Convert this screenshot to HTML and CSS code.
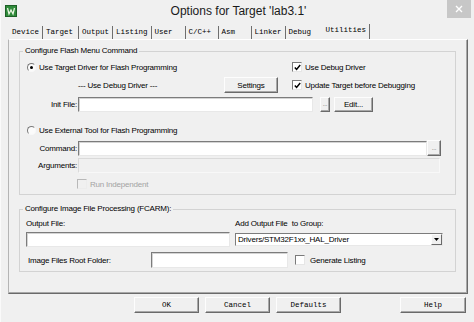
FILE: index.html
```html
<!DOCTYPE html>
<html lang="en">
<head>
    <meta charset="UTF-8">
    <meta name="viewport" content="width=device-width, initial-scale=1.0">
    <title>Options for Target 'lab3.1'</title>
    <link rel="stylesheet" href="styles.css">
</head>
<body>
<div class="window">
    <div class="titlebar">
        <div class="app-icon">
            <svg width="12" height="12" viewBox="0 0 12 12">
                <rect x="0.5" y="0.5" width="11" height="11" fill="#2f8a3a" stroke="#1d5f26"/>
                <polyline points="2.5,3 4,9 6,5 8,9 9.5,3" fill="none" stroke="#e8f5e0" stroke-width="1.3"/>
            </svg>
        </div>
        <div class="title">Options for Target 'lab3.1'</div>
        <div class="close">
            <svg width="8" height="8" viewBox="0 0 8 8">
                <path d="M1 1 L7 7 M7 1 L1 7" stroke="#fff" stroke-width="1.4"/>
            </svg>
        </div>
    </div>

    <div class="tabs">
        <span class="tab">Device</span>
        <span class="tab wide">Target</span>
        <span class="tab">Output</span>
        <span class="tab">Listing</span>
        <span class="tab mid">User</span>
        <span class="tab">C/C++</span>
        <span class="tab">Asm</span>
        <span class="tab mid">Linker</span>
        <span class="tab mid before-active">Debug</span>
        <span class="tab active">Utilities</span>
    </div>

    <div class="panel">
        <fieldset class="group flash">
            <legend>Configure Flash Menu Command</legend>

            <div class="row r1">
                <div class="left">
                    <span class="radio on"></span>
                    <span>Use Target Driver for Flash Programming</span>
                </div>
                <div class="opt">
                    <span class="check"><svg width="7" height="7" viewBox="0 0 7 7"><polyline points="0.8,3.4 2.6,5.4 6.2,1" fill="none" stroke="#000" stroke-width="1.5"/></svg></span>
                    <span>Use Debug Driver</span>
                </div>
            </div>

            <div class="row r2">
                <div class="left">
                    <span class="debug-driver">--- Use Debug Driver ---</span>
                    <span class="btn settings">Settings</span>
                </div>
                <div class="opt">
                    <span class="check"><svg width="7" height="7" viewBox="0 0 7 7"><polyline points="0.8,3.4 2.6,5.4 6.2,1" fill="none" stroke="#000" stroke-width="1.5"/></svg></span>
                    <span>Update Target before Debugging</span>
                </div>
            </div>

            <div class="row r3">
                <span class="lbl">Init File:</span>
                <span class="field init-file"></span>
                <span class="btn dots small">...</span>
                <span class="btn edit">Edit...</span>
            </div>

            <div class="row r4">
                <span class="radio"></span>
                <span>Use External Tool for Flash Programming</span>
            </div>

            <div class="row r5">
                <span class="lbl">Command:</span>
                <span class="field command"></span>
                <span class="btn cmd-dots small">...</span>
            </div>

            <div class="row r6">
                <span class="lbl">Arguments:</span>
                <span class="field disabled arguments"></span>
            </div>

            <div class="row r7">
                <span class="check disabled"></span>
                <span class="greyed">Run Independent</span>
            </div>
        </fieldset>

        <fieldset class="group fcarm">
            <legend>Configure Image File Processing (FCARM):</legend>

            <div class="row ra">
                <span class="col-left">Output File:</span>
                <span class="col-right">Add Output File &nbsp;to Group:</span>
            </div>

            <div class="row rb">
                <span class="field output-file"></span>
                <span class="select">
                    <span class="select-text">Drivers/STM32F1xx_HAL_Driver</span>
                    <span class="select-arrow"><svg width="5" height="3" viewBox="0 0 5 3"><path d="M0 0 H5 L2.5 3 Z" fill="#000"/></svg></span>
                </span>
            </div>

            <div class="row rc">
                <span class="root-label">Image Files Root Folder:</span>
                <span class="field root-folder"></span>
                <span class="check"></span>
                <span class="gen-label">Generate Listing</span>
            </div>
        </fieldset>
    </div>

    <div class="buttons">
        <span class="btn big">OK</span>
        <span class="btn big">Cancel</span>
        <span class="btn big">Defaults</span>
        <span class="btn big help">Help</span>
    </div>
</div>
</body>
</html>
```

FILE: styles.css
```css
body {
    margin: 0;
    background-color: #f0f0f0;
    font-family: "Liberation Sans", Arial, sans-serif;
    font-size: 8px;
    letter-spacing: -0.2px;
    color: #000;
}
.window {
    width: 474px;
    height: 322px;
    overflow: hidden;
    background-color: #f0f0f0;
    box-sizing: border-box;
    border-left: 1px solid #fafafa;
}

/* title bar */
.titlebar {
    height: 21px;
    display: grid;
    grid-template-columns: 1fr auto 1fr;
    align-items: center;
}
.app-icon {
    margin-left: 4px;
    height: 12px;
}
.title {
    font-size: 12px;
    letter-spacing: 0;
    color: #1a1a1a;
    padding-left: 2px;
}
.close {
    justify-self: end;
    align-self: start;
    width: 24px;
    height: 18px;
    margin-right: 3px;
    background-color: #c7c7c7;
    display: flex;
    align-items: center;
    justify-content: center;
}

/* tabs */
.tabs {
    height: 18px;
    display: flex;
    align-items: flex-end;
    padding-left: 8px;
    font-family: "Liberation Mono", "Courier New", monospace;
    font-size: 7.5px;
    letter-spacing: 0;
}
.tab {
    min-width: 26px;
    height: 13px;
    line-height: 12px;
    padding: 0 3px;
    border-right: 1px solid #6e6e6e;
    box-sizing: content-box;
}
.tab.wide {
    min-width: 29px;
}
.tab.mid {
    min-width: 27px;
}
.tab.before-active {
    border-right-color: transparent;
}
.tab.active {
    height: 15px;
    line-height: 12px;
    padding: 0 3px 0 6px;
}

/* tab page */
.panel {
    width: 460px;
    height: 255px;
    margin-left: 7px;
    box-sizing: border-box;
    border-top: 1px solid #ffffff;
    border-left: 1px solid #b4b4b4;
    border-right: 1px solid #6a6a6a;
    border-bottom: 1px solid #6a6a6a;
    box-shadow: inset -1px -1px 0 #a8a8a8;
    overflow: hidden;
}
.group {
    width: 437px;
    margin: 0 0 0 10px;
    padding: 0;
    box-sizing: border-box;
    border: 1px solid #d3d3d3;
}
.group legend {
    margin-left: 3px;
    padding: 0 2px;
    line-height: 12px;
}
.flash {
    margin-top: 5px;
    padding-bottom: 1px;
}
.fcarm {
    margin-top: 8px;
    padding-bottom: 3px;
}

.row {
    display: flex;
    align-items: center;
}
.r1 { height: 20px; }
.r2 { height: 16px; }
.r3 { height: 16px; margin-top: 3px; }
.r4 { height: 18px; margin-top: 9px; padding-left: 7px; }
.r5 { height: 16px; margin-top: 1px; }
.r6 { height: 16px; margin-top: 1px; }
.r7 { height: 18px; margin-top: 2px; padding-left: 57px; }

.left {
    width: 272px;
    display: flex;
    align-items: center;
}
.r1 .left {
    padding-left: 7px;
    box-sizing: border-box;
}
.opt {
    display: flex;
    align-items: center;
}
.debug-driver {
    margin-left: 58px;
    width: 146px;
}
.lbl {
    width: 57px;
    text-align: right;
    flex-shrink: 0;
}

/* controls */
.radio {
    width: 7px;
    height: 7px;
    border-radius: 50%;
    border: 1px solid;
    border-color: #7a7a7a #f8f8f8 #f8f8f8 #7a7a7a;
    background-color: #fbfbfb;
    margin-right: 3px;
    display: flex;
    align-items: center;
    justify-content: center;
}
.radio.on::after {
    content: "";
    width: 3px;
    height: 3px;
    border-radius: 50%;
    background-color: #000;
}
.check {
    width: 8px;
    height: 8px;
    border: 1px solid;
    border-color: #7a7a7a #e6e6e6 #e6e6e6 #7a7a7a;
    background-color: #fff;
    margin-right: 3px;
    display: flex;
    align-items: center;
    justify-content: center;
    flex-shrink: 0;
}
.check.disabled {
    border-color: #b8b8b8 #ececec #ececec #b8b8b8;
    background-color: #f0f0f0;
}
.greyed {
    color: #a3a3a3;
}
.field {
    height: 15px;
    box-sizing: border-box;
    background-color: #fff;
    border: 1px solid;
    border-color: #7c7c7c #e8e8e8 #e8e8e8 #7c7c7c;
    box-shadow: inset 1px 1px 0 #d4d4d4;
    flex-shrink: 0;
}
.field.disabled {
    background-color: #f0f0f0;
    border-color: #dadada #f8f8f8 #f8f8f8 #dadada;
    box-shadow: none;
}
.btn {
    height: 15px;
    box-sizing: border-box;
    border: 1px solid;
    border-color: #fdfdfd #6a6a6a #6a6a6a #fdfdfd;
    box-shadow: inset -1px -1px 0 #a8a8a8;
    background-color: #f0f0f0;
    display: flex;
    align-items: center;
    justify-content: center;
    flex-shrink: 0;
}
.btn.small {
    font-size: 6px;
    color: #555;
}
.settings {
    width: 54px;
    height: 16px;
}
.init-file {
    margin-left: 1px;
    width: 235px;
}
.dots {
    width: 10px;
    margin-left: 7px;
}
.edit {
    width: 39px;
    margin-left: 4px;
}
.command {
    margin-left: 1px;
    width: 349px;
}
.cmd-dots {
    width: 14px;
    height: 16px;
}
.arguments {
    margin-left: 1px;
    width: 362px;
}

/* FCARM group */
.ra { height: 14px; margin-top: 1px; padding-left: 6px; }
.rb { height: 15px; margin-top: 2px; padding-left: 6px; }
.rc { height: 16px; margin-top: 5px; padding-left: 8px; }
.col-left {
    width: 209px;
}
.output-file {
    width: 204px;
}
.select {
    margin-left: 5px;
    width: 208px;
    height: 13px;
    box-sizing: border-box;
    background-color: #fff;
    border: 1px solid;
    border-color: #7c7c7c #e8e8e8 #e8e8e8 #7c7c7c;
    display: flex;
    align-items: center;
}
.select-text {
    flex: 1;
    padding-left: 2px;
}
.select-arrow {
    width: 11px;
    height: 11px;
    box-sizing: border-box;
    border: 1px solid;
    border-color: #fdfdfd #6a6a6a #6a6a6a #fdfdfd;
    background-color: #f0f0f0;
    display: flex;
    align-items: center;
    justify-content: center;
}
.root-label {
    width: 123px;
}
.root-folder {
    width: 137px;
    height: 16px;
    margin-right: 7px;
}
.gen-label {
    margin-left: 2px;
}

/* dialog buttons */
.buttons {
    display: flex;
    gap: 6px;
    margin-top: 3px;
    padding-left: 133px;
    padding-right: 8px;
}
.btn.big {
    width: 65px;
    height: 16px;
    font-family: "Liberation Mono", "Courier New", monospace;
    font-size: 7.5px;
    letter-spacing: 0;
}
.btn.help {
    margin-left: auto;
    width: 66px;
}
```
